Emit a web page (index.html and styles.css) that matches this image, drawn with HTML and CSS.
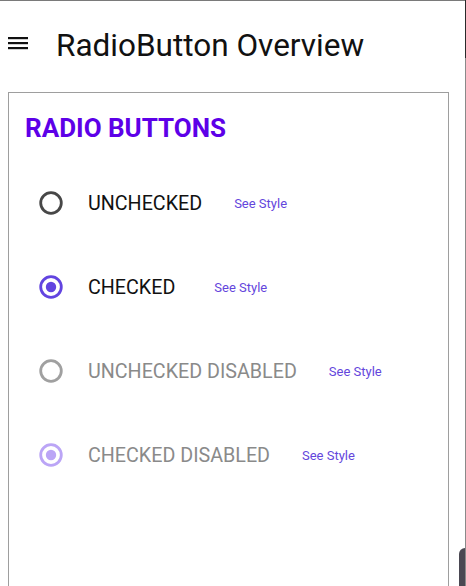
FILE: index.html
```html
<!DOCTYPE html>
<html>
<head>
<meta charset="utf-8">
<link rel="stylesheet" href="styles.css">
</head>
<body>
<div class="frame-top"></div>
<div class="frame-right"></div>
<div class="frame-right-dark"></div>
<div class="frame-corner"></div>
<header class="appbar">
  <svg class="menu" width="20" height="14" viewBox="0 0 20 14"><rect x="0" y="1" width="20" height="2.2" fill="#111"/><rect x="0" y="6" width="20" height="2.2" fill="#111"/><rect x="0" y="11" width="20" height="2.2" fill="#111"/></svg>
  <h1 class="title">RadioButton Overview</h1>
</header>
<section class="card">
  <h2 class="card-title">RADIO BUTTONS</h2>
  <div class="row">
    <svg class="radio" width="24" height="24" viewBox="0 0 24 24"><circle cx="12" cy="12" r="10.3" fill="none" stroke="#474747" stroke-width="2.8"/></svg>
    <span class="label">UNCHECKED</span>
    <a class="style-link">See Style</a>
  </div>
  <div class="row">
    <svg class="radio" width="24" height="24" viewBox="0 0 24 24"><circle cx="12" cy="12" r="10.3" fill="none" stroke="#6244e0" stroke-width="2.8"/><circle cx="12" cy="12" r="5.2" fill="#6244e0"/></svg>
    <span class="label label-checked">CHECKED</span>
    <a class="style-link">See Style</a>
  </div>
  <div class="row">
    <svg class="radio" width="24" height="24" viewBox="0 0 24 24"><circle cx="12" cy="12" r="10.3" fill="none" stroke="#a0a0a0" stroke-width="2.8"/></svg>
    <span class="label label-disabled">UNCHECKED DISABLED</span>
    <a class="style-link">See Style</a>
  </div>
  <div class="row">
    <svg class="radio" width="24" height="24" viewBox="0 0 24 24"><circle cx="12" cy="12" r="10.3" fill="none" stroke="#bba5f6" stroke-width="2.8"/><circle cx="12" cy="12" r="5.2" fill="#bba5f6"/></svg>
    <span class="label label-disabled">CHECKED DISABLED</span>
    <a class="style-link">See Style</a>
  </div>
</section>
</body>
</html>
```
FILE: styles.css
```css
html, body {
  margin: 0;
  padding: 0;
  background: #fff;
  font-family: Roboto, "Liberation Sans", sans-serif;
  overflow: hidden;
  height: 586px;
}
.frame-top {
  position: absolute;
  left: 0; top: 0;
  width: 466px; height: 1px;
  background: #7a7a7a;
}
.frame-right {
  position: absolute;
  left: 465px; top: 0;
  width: 1px; height: 586px;
  background: #8a8a8a;
}
.frame-right-dark {
  position: absolute;
  left: 465px; top: 0;
  width: 1px; height: 58px;
  background: #2a2a2a;
}
.frame-corner {
  position: absolute;
  left: 459px; top: 548px;
  width: 6px; height: 38px;
  background: #4a4852;
  border-top-left-radius: 6px;
}
.appbar {
  display: flex;
  align-items: center;
  height: 92px;
  padding-left: 8px;
  box-sizing: border-box;
}
.menu {
  display: block;
  margin-top: -6px;
}
.title {
  margin: 0 0 0 28px;
  font-weight: 400;
  font-size: 31.5px;
  color: #111;
  line-height: 32px;
}
.card {
  margin-left: 8px;
  width: 441px;
  height: 520px;
  box-sizing: border-box;
  border: 1px solid #9e9e9e;
  padding: 20px 0 0 16px;
}
.card-title {
  margin: 0 0 18px 0;
  font-size: 26px;
  line-height: 30px;
  font-weight: 700;
  color: #5d00e8;
}
.row {
  display: flex;
  align-items: center;
  height: 84px;
  padding-left: 14px;
}
.radio {
  display: block;
  flex: none;
}
.label {
  margin-left: 25px;
  font-size: 19.7px;
  color: #111;
}
.label-checked {
  margin-right: 7px;
}
.label-disabled {
  color: #8a8a8a;
}
.style-link {
  margin-left: 32px;
  font-size: 13px;
  color: #6446dc;
}
```
